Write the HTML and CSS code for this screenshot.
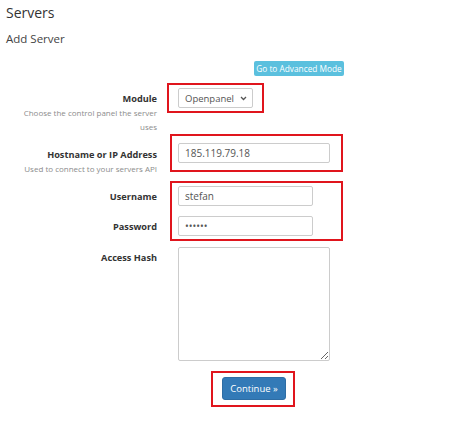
FILE: index.html
```html
<!DOCTYPE html>
<html lang="en">
<head>
<meta charset="utf-8">
<title>Servers - Add Server</title>
<link rel="stylesheet" href="styles.css">
</head>
<body>
<div class="page">
  <h1 class="title">Servers</h1>
  <h2 class="subtitle">Add Server</h2>
  <div class="toolbar">
    <button class="btn-info" type="button">Go to Advanced Mode</button>
  </div>
  <form class="form">
    <div class="row row-module">
      <div class="label-col">
        <label class="label">Module</label>
        <div class="help">Choose the control panel the server uses</div>
      </div>
      <div class="field-col">
        <div class="mark mark-module">
          <div class="select">
            <span>Openpanel</span>
            <svg class="chev" width="7" height="5" viewBox="0 0 7 5"><path d="M1 1 L3.5 3.5 L6 1" fill="none" stroke="#555" stroke-width="1.3"/></svg>
          </div>
        </div>
      </div>
    </div>
    <div class="row row-host">
      <div class="label-col">
        <label class="label">Hostname or IP Address</label>
        <div class="help">Used to connect to your servers API</div>
      </div>
      <div class="field-col">
        <div class="mark mark-host">
          <input class="input input-wide" type="text" value="185.119.79.18">
        </div>
      </div>
    </div>
    <div class="mark mark-group">
      <div class="row row-user">
        <div class="label-col"><label class="label">Username</label></div>
        <div class="field-col"><input class="input input-mid" type="text" value="stefan"></div>
      </div>
      <div class="row row-pass">
        <div class="label-col"><label class="label">Password</label></div>
        <div class="field-col"><input class="input input-mid" type="password" value="secret"></div>
      </div>
    </div>
    <div class="row row-hash">
      <div class="label-col"><label class="label">Access Hash</label></div>
      <div class="field-col"><textarea class="textarea"></textarea></div>
    </div>
    <div class="row row-submit">
      <div class="label-col"></div>
      <div class="field-col submit-col">
        <div class="mark mark-submit">
          <button class="btn-primary" type="button">Continue &raquo;</button>
        </div>
      </div>
    </div>
  </form>
</div>
</body>
</html>
```
FILE: styles.css
```css
html, body {
  margin: 0;
  padding: 0;
  background: #fff;
}
body {
  font-family: "Open Sans", "Noto Sans", "Liberation Sans", sans-serif;
  color: #333;
}
.page {
  width: 474px;
  padding-top: 3px;
  padding-bottom: 24px;
}
.title {
  margin: 0 0 0 6px;
  font-size: 14px;
  font-weight: 400;
  line-height: 20px;
  color: #333;
}
.subtitle {
  margin: 8px 0 0 6px;
  font-size: 11.5px;
  font-weight: 400;
  line-height: 16px;
  color: #444;
}
.toolbar {
  width: 344px;
  display: flex;
  justify-content: flex-end;
  margin-top: 14px;
}
.btn-info {
  background: #5bc0de;
  color: #fff;
  border: none;
  border-radius: 2px;
  font-family: inherit;
  font-size: 8.3px;
  line-height: 15px;
  height: 15px;
  padding: 0;
  width: 90px;
  white-space: nowrap;
}
.form {
  margin-top: 12px;
}
.row {
  display: flex;
  align-items: flex-start;
  column-gap: 21px;
}
.label-col {
  width: 157px;
  flex: none;
  text-align: right;
  display: flex;
  flex-direction: column;
  align-items: flex-end;
}
.field-col {
  width: 152px;
  flex: none;
  display: flex;
  flex-direction: column;
  align-items: flex-start;
}
.label {
  display: block;
  font-weight: 700;
  font-size: 9.2px;
  line-height: 14px;
  padding-top: 4px;
  color: #333;
}
.help {
  font-size: 8px;
  line-height: 14px;
  color: #8c8c8c;
  max-width: 140px;
}
.row-host { margin-top: 9px; }
.mark-group { margin-top: 10px; }
.row-pass { margin-top: 10px; }
.row-hash { margin-top: 11px; }
.row-submit { margin-top: 16px; }
.row-host .label { padding-top: 5px; }

.mark {
  position: relative;
}
.mark::after {
  content: "";
  position: absolute;
  border: 2.5px solid #e0151d;
  pointer-events: none;
}
.mark-module::after {
  left: -11px; right: -11px; top: -5px; bottom: -5px;
}
.mark-host::after {
  left: -8px; right: -13px; top: -9px; bottom: -9px;
}
.mark-group::after {
  left: 170px; width: 173px; top: -5px; bottom: -5px;
  box-sizing: border-box;
}
.mark-submit::after {
  left: -11px; right: -9px; top: -6px; bottom: -7px;
}

.select {
  box-sizing: border-box;
  width: 75px;
  height: 20px;
  border: 1px solid #ccc;
  border-radius: 2px;
  display: flex;
  align-items: center;
  justify-content: space-between;
  padding: 0 5px 0 6px;
  font-size: 9.5px;
  color: #555;
  background: #fff;
}
.chev { display: block; }
.input {
  box-sizing: border-box;
  height: 20px;
  border: 1px solid #ccc;
  border-radius: 2px;
  padding: 0 6px;
  font-family: inherit;
  font-size: 10px;
  color: #555;
  background: #fff;
  display: block;
  margin: 0;
}
.input-wide { width: 152px; }
.input-mid { width: 135px; }
.textarea {
  box-sizing: border-box;
  display: block;
  width: 152px;
  height: 114px;
  border: 1px solid #ccc;
  border-radius: 2px;
  margin: 0;
  padding: 4px 6px;
  font-family: inherit;
  font-size: 10px;
}
.submit-col {
  align-items: center;
}
.btn-primary {
  background: #337ab7;
  color: #fff;
  border: 1px solid #2e6da4;
  border-radius: 3px;
  font-family: inherit;
  font-size: 9.5px;
  height: 23px;
  width: 64px;
  padding: 0;
  display: block;
}
```
